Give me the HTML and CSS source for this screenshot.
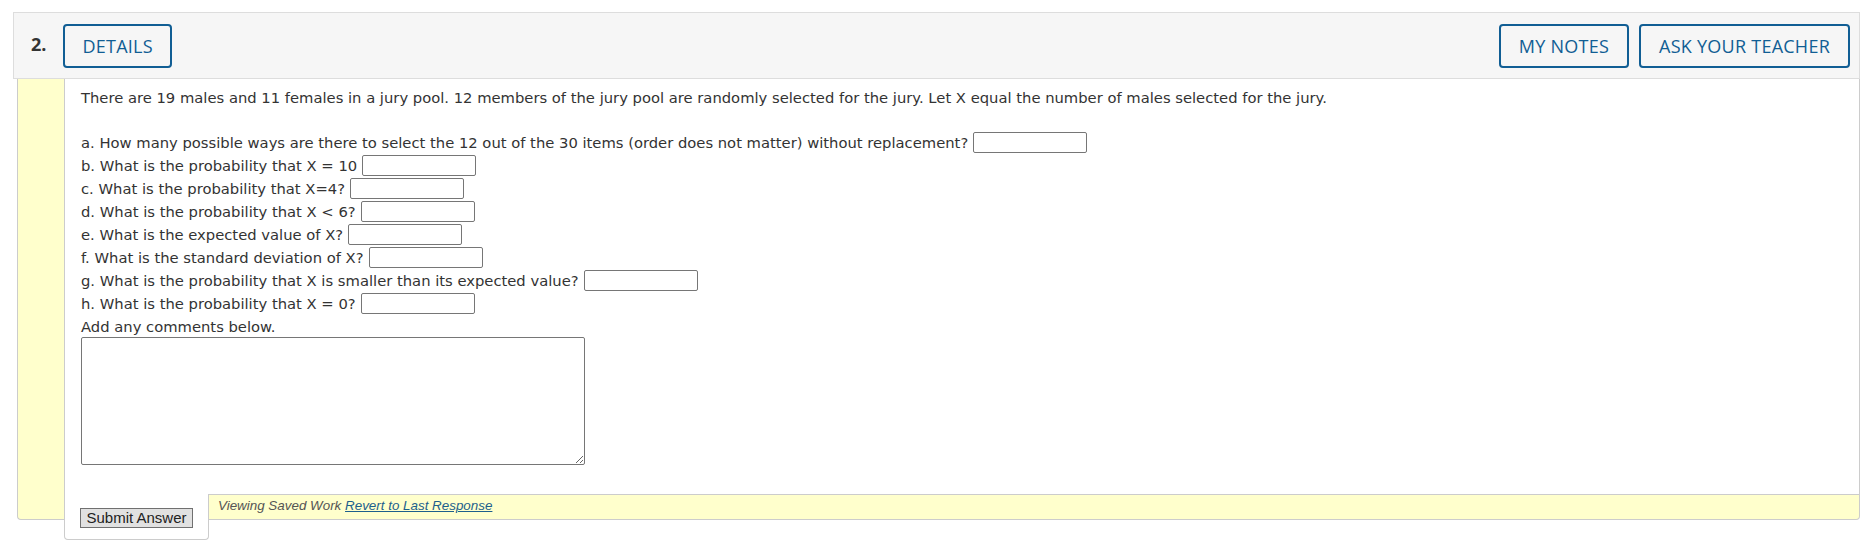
FILE: index.html
```html
<!DOCTYPE html>
<html lang="en">
<head>
<meta charset="utf-8">
<title>Question 2</title>
<link rel="stylesheet" href="styles.css">
</head>
<body>
<div class="question">
  <div class="qhead">
    <span class="qnum">2.</span>
    <button class="btn btn-details" type="button">DETAILS</button>
    <span class="spacer"></span>
    <button class="btn" type="button">MY NOTES</button>
    <button class="btn btn-gap" type="button">ASK YOUR TEACHER</button>
  </div>
  <div class="qbody">
    <div class="gutter"></div>
    <div class="main">
      <div class="content">
        <div class="intro">There are 19 males and 11 females in a jury pool. 12 members of the jury pool are randomly selected for the jury. Let X equal the number of males selected for the jury.</div>
        <div class="row">a. How many possible ways are there to select the 12 out of the 30 items (order does not matter) without replacement?<input type="text"></div>
        <div class="row">b. What is the probability that X = 10<input type="text"></div>
        <div class="row">c. What is the probability that X=4?<input type="text"></div>
        <div class="row">d. What is the probability that X &lt; 6?<input type="text"></div>
        <div class="row">e. What is the expected value of X?<input type="text"></div>
        <div class="row">f. What is the standard deviation of X?<input type="text"></div>
        <div class="row">g. What is the probability that X is smaller than its expected value?<input type="text"></div>
        <div class="row">h. What is the probability that X = 0?<input type="text"></div>
        <div class="addrow">Add any comments below.</div>
        <textarea class="comments"></textarea>
      </div>
    </div>
  </div>
  <div class="footer">
    <div class="gutter-end"></div>
    <div class="submitbox"><button class="submit" type="button">Submit Answer</button></div>
    <div class="saved">Viewing Saved Work <a href="#" class="revert">Revert to Last Response</a></div>
  </div>
</div>
</body>
</html>
```

FILE: styles.css
```css
body {
  margin: 0;
  background: #fff;
  font-family: "DejaVu Sans", Verdana, sans-serif;
  color: #333;
}

.question {
  margin: 12px 9px 0 13px;
}

.qhead {
  display: flex;
  align-items: center;
  height: 67px;
  box-sizing: border-box;
  border: 1px solid #ddd;
  background: #f6f6f6;
  padding: 0 9px 0 17px;
  font-family: "Open Sans", sans-serif;
}

.qnum {
  font-weight: 700;
  font-size: 18px;
  color: #333;
  margin-right: 17px;
  margin-bottom: 3px;
}

.btn {
  height: 44px;
  box-sizing: border-box;
  border: 2px solid #115e94;
  border-radius: 4px;
  background: transparent;
  color: #115e94;
  font-family: "Open Sans", sans-serif;
  font-size: 18px;
  font-weight: 400;
  letter-spacing: 0.25px;
  padding: 0 18px;
  margin: 0;
}

.btn-details {
  padding: 0 17px;
}

.btn-gap {
  margin-left: 10px;
}

.spacer {
  flex: 1;
}

.qbody {
  display: flex;
  margin-left: 4px;
  border-left: 1px solid #ccc;
  border-right: 1px solid #ccc;
  background: #ffffcc;
}

.gutter {
  width: 46px;
  flex: none;
}

.main {
  flex: 1;
  background: #fff;
  border-left: 1px solid #ccc;
}

.content {
  padding: 7px 16px 29px 16px;
  font-size: 14.75px;
}

.intro {
  height: 23px;
  display: flex;
  align-items: center;
  margin-bottom: 22px;
  white-space: nowrap;
}

.row {
  height: 23px;
  display: flex;
  align-items: center;
  white-space: pre;
}

.row input {
  width: 114px;
  height: 21px;
  box-sizing: border-box;
  border: 1px solid #767676;
  border-radius: 2px;
  margin: 0 0 0 5px;
  padding: 0 2px;
  background: #fff;
  font: inherit;
}

.addrow {
  height: 22px;
  display: flex;
  align-items: center;
}

.comments {
  display: block;
  width: 504px;
  height: 128px;
  box-sizing: border-box;
  border: 1px solid #767676;
  border-radius: 2px;
  margin: 0;
  padding: 2px;
  resize: both;
  background: #fff;
}

.footer {
  display: flex;
  align-items: flex-start;
  margin-left: 4px;
}

.gutter-end {
  flex: none;
  width: 47px;
  height: 26px;
  box-sizing: border-box;
  background: #ffffcc;
  border-left: 1px solid #ccc;
  border-bottom: 1px solid #ccc;
  border-bottom-left-radius: 4px;
}

.submitbox {
  flex: none;
  width: 145px;
  height: 46px;
  box-sizing: border-box;
  border: 1px solid #ccc;
  border-top: 0;
  border-radius: 0 0 4px 4px;
  background: #fff;
  padding: 14px 0 0 15px;
}

.submit {
  display: block;
  height: 20px;
  width: 113px;
  box-sizing: border-box;
  padding: 0;
  margin: 0;
  border: 1px solid #707070;
  border-radius: 0;
  background: #e1e1e1;
  color: #222;
  font-family: "Liberation Sans", Arial, sans-serif;
  font-size: 15px;
  line-height: 18px;
}

.saved {
  flex: 1;
  height: 26px;
  box-sizing: border-box;
  border-top: 1px solid #ccc;
  border-bottom: 1px solid #ccc;
  border-right: 1px solid #ccc;
  border-bottom-right-radius: 4px;
  background: #ffffcc;
  padding: 3px 0 0 9px;
  font-family: "Liberation Sans", Arial, sans-serif;
  font-style: italic;
  font-size: 13.4px;
  line-height: 15px;
  color: #555;
}

.revert {
  color: #1d5f8c;
  text-decoration: underline;
}
```
